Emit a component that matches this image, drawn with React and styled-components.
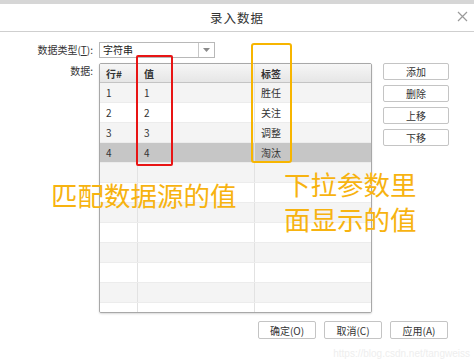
import React from "react";
import styled, { createGlobalStyle } from "styled-components";

const GlobalStyle = createGlobalStyle`
  html, body {
    margin: 0;
    padding: 0;
    background: #ffffff;
  }
  body {
    font-family: "Liberation Sans", "Noto Sans CJK SC", sans-serif;
    color: #222;
  }
`;

const rows = [
  { no: "1", value: "1", label: "胜任" },
  { no: "2", value: "2", label: "关注" },
  { no: "3", value: "3", label: "调整" },
  { no: "4", value: "4", label: "淘汰", selected: true },
];

const EMPTY_ROWS = 8;

const App = () => {
  const allRows = [...rows];
  for (let i = 0; i < EMPTY_ROWS; i++) allRows.push({ no: "", value: "", label: "" });

  return (
    <>
      <GlobalStyle />
      <Dialog>
        <Backdrop />
        <TitleBar>
          <Title>录入数据</Title>
          <CloseButton>
            <svg width="11" height="11" viewBox="0 0 11 11">
              <path d="M1 1 L10 10 M10 1 L1 10" stroke="#9a9a9a" strokeWidth="1.2" fill="none" />
            </svg>
          </CloseButton>
        </TitleBar>

        <Body>
          <FormRow>
            <Label>
              数据类型(<u>T</u>):
            </Label>
            <Select>
              <SelectValue>字符串</SelectValue>
              <SelectArrow>
                <svg width="7" height="4" viewBox="0 0 7 4">
                  <path d="M0 0 L7 0 L3.5 4 Z" fill="#8a8a8a" />
                </svg>
              </SelectArrow>
            </Select>
          </FormRow>

          <DataRow>
            <DataLabel>数据:</DataLabel>
            <Table>
              <HeaderRow>
                <Cell $w={38} $head>行#</Cell>
                <Cell $w={117} $head>值</Cell>
                <Cell $head $last>标签</Cell>
              </HeaderRow>
              {allRows.map((r, i) => (
                <Row key={i} $odd={i % 2 === 0} $selected={r.selected}>
                  <Cell $w={38}>{r.no}</Cell>
                  <Cell $w={117}>{r.value}</Cell>
                  <Cell $last>{r.label}</Cell>
                </Row>
              ))}
            </Table>
            <SideButtons>
              <SmallButton>添加</SmallButton>
              <SmallButton>删除</SmallButton>
              <SmallButton>上移</SmallButton>
              <SmallButton>下移</SmallButton>
            </SideButtons>
          </DataRow>

          <Footer>
            <FooterButton>确定(O)</FooterButton>
            <FooterButton>取消(C)</FooterButton>
            <FooterButton>应用(A)</FooterButton>
          </Footer>
        </Body>

        <RedMark />
        <GoldMark />
        <NoteLeft>匹配数据源的值</NoteLeft>
        <NoteRight>
          下拉参数里
          <br />
          面显示的值
        </NoteRight>
        <Watermark>https://blog.csdn.net/tangweiss</Watermark>
      </Dialog>
    </>
  );
};

export default App;

const Dialog = styled.div`
  position: relative;
  width: 474px;
  height: 362px;
  background: #ffffff;
  overflow: hidden;
`;

const Backdrop = styled.div`
  height: 4px;
  background: #d6d6d6;
`;

const TitleBar = styled.div`
  position: relative;
  height: 27px;
  display: flex;
  align-items: center;
  justify-content: center;
  border-bottom: 1px solid #cfcfcf;
`;

const Title = styled.div`
  font-family: "Noto Sans CJK SC", sans-serif;
  font-size: 12.5px;
  color: #333;
  letter-spacing: 1px;
`;

const CloseButton = styled.div`
  position: absolute;
  right: 6px;
  top: 7px;
  width: 11px;
  height: 11px;
  display: flex;
`;

const Body = styled.div`
  padding: 9px 0 0 0;
`;

const FormRow = styled.div`
  display: flex;
  align-items: center;
  height: 17px;
`;

const Label = styled.div`
  width: 96px;
  padding-right: 3px;
  box-sizing: border-box;
  text-align: right;
  font-family: "Noto Sans CJK SC", sans-serif;
  font-size: 10px;
  color: #333;
  u {
    text-decoration: underline;
  }
`;

const Select = styled.div`
  margin-left: 3px;
  width: 116px;
  height: 16px;
  box-sizing: border-box;
  border: 1px solid #b8b8b8;
  display: flex;
  align-items: stretch;
  background: #fff;
`;

const SelectValue = styled.div`
  flex: 1;
  font-family: "Noto Sans CJK SC", sans-serif;
  font-size: 10px;
  line-height: 14px;
  padding-left: 3px;
  color: #222;
`;

const SelectArrow = styled.div`
  width: 15px;
  border-left: 1px solid #c8c8c8;
  display: flex;
  align-items: center;
  justify-content: center;
`;

const DataRow = styled.div`
  display: flex;
  align-items: flex-start;
  margin-top: 5px;
`;

const DataLabel = styled.div`
  width: 96px;
  padding-right: 3px;
  box-sizing: border-box;
  text-align: right;
  font-family: "Noto Sans CJK SC", sans-serif;
  font-size: 10px;
  line-height: 16px;
  color: #333;
`;

const Table = styled.div`
  margin-left: 3px;
  width: 273px;
  height: 250px;
  box-sizing: border-box;
  border: 1px solid #a8a8a8;
  border-radius: 2px;
  box-shadow: 0 1px 2px rgba(0, 0, 0, 0.15);
  overflow: hidden;
  background: #fff;
`;

const HeaderRow = styled.div`
  display: flex;
  height: 18px;
  background: linear-gradient(#f6f6f6, #e6e6e6);
  border-bottom: 1px solid #c4c4c4;
`;

const Row = styled.div`
  display: flex;
  height: 20px;
  background: ${(p) => (p.$selected ? "#c6c6c6" : p.$odd ? "#f4f4f4" : "#ffffff")};
  border-bottom: 1px solid #ececec;
  box-sizing: border-box;
`;

const Cell = styled.div`
  ${(p) => (p.$w ? `width: ${p.$w}px;` : "flex: 1;")}
  box-sizing: border-box;
  border-right: ${(p) => (p.$last ? "none" : "1px solid #e2e2e2")};
  padding-left: 6px;
  display: flex;
  align-items: center;
  font-family: "Noto Sans CJK SC", sans-serif;
  font-size: 10px;
  font-weight: ${(p) => (p.$head ? 700 : 400)};
  color: #333;
`;

const SideButtons = styled.div`
  margin-left: 11px;
  display: flex;
  flex-direction: column;
  gap: 5px;
`;

const SmallButton = styled.div`
  width: 66px;
  height: 17px;
  box-sizing: border-box;
  border: 1px solid #c4c4c4;
  border-radius: 2px;
  background: #fff;
  display: flex;
  align-items: center;
  justify-content: center;
  font-family: "Noto Sans CJK SC", sans-serif;
  font-size: 10px;
  color: #333;
`;

const Footer = styled.div`
  display: flex;
  justify-content: flex-end;
  gap: 8px;
  padding-right: 26px;
  margin-top: 8px;
`;

const FooterButton = styled.div`
  width: 58px;
  height: 18px;
  box-sizing: border-box;
  border: 1px solid #c4c4c4;
  border-radius: 2px;
  background: #fff;
  display: flex;
  align-items: center;
  justify-content: center;
  font-family: "Noto Sans CJK SC", sans-serif;
  font-size: 10px;
  color: #333;
`;

const RedMark = styled.div`
  position: absolute;
  left: 136px;
  top: 55px;
  width: 37px;
  height: 111px;
  box-sizing: border-box;
  border: 2px solid #e81414;
  border-radius: 2px;
`;

const GoldMark = styled.div`
  position: absolute;
  left: 251px;
  top: 43px;
  width: 41px;
  height: 120px;
  box-sizing: border-box;
  border: 2.5px solid #f7b500;
  border-radius: 3px;
`;

const Note = styled.div`
  position: absolute;
  font-family: "Noto Sans CJK SC", sans-serif;
  font-size: 26.5px;
  color: #f7b310;
  white-space: nowrap;
`;

const NoteLeft = styled(Note)`
  left: 51px;
  top: 177px;
  line-height: 36px;
`;

const NoteRight = styled(Note)`
  left: 284px;
  top: 166px;
  line-height: 35px;
`;

const Watermark = styled.div`
  position: absolute;
  right: 4px;
  bottom: 3px;
  font-family: "Liberation Sans", sans-serif;
  font-size: 10px;
  color: #eeeeee;
`;
